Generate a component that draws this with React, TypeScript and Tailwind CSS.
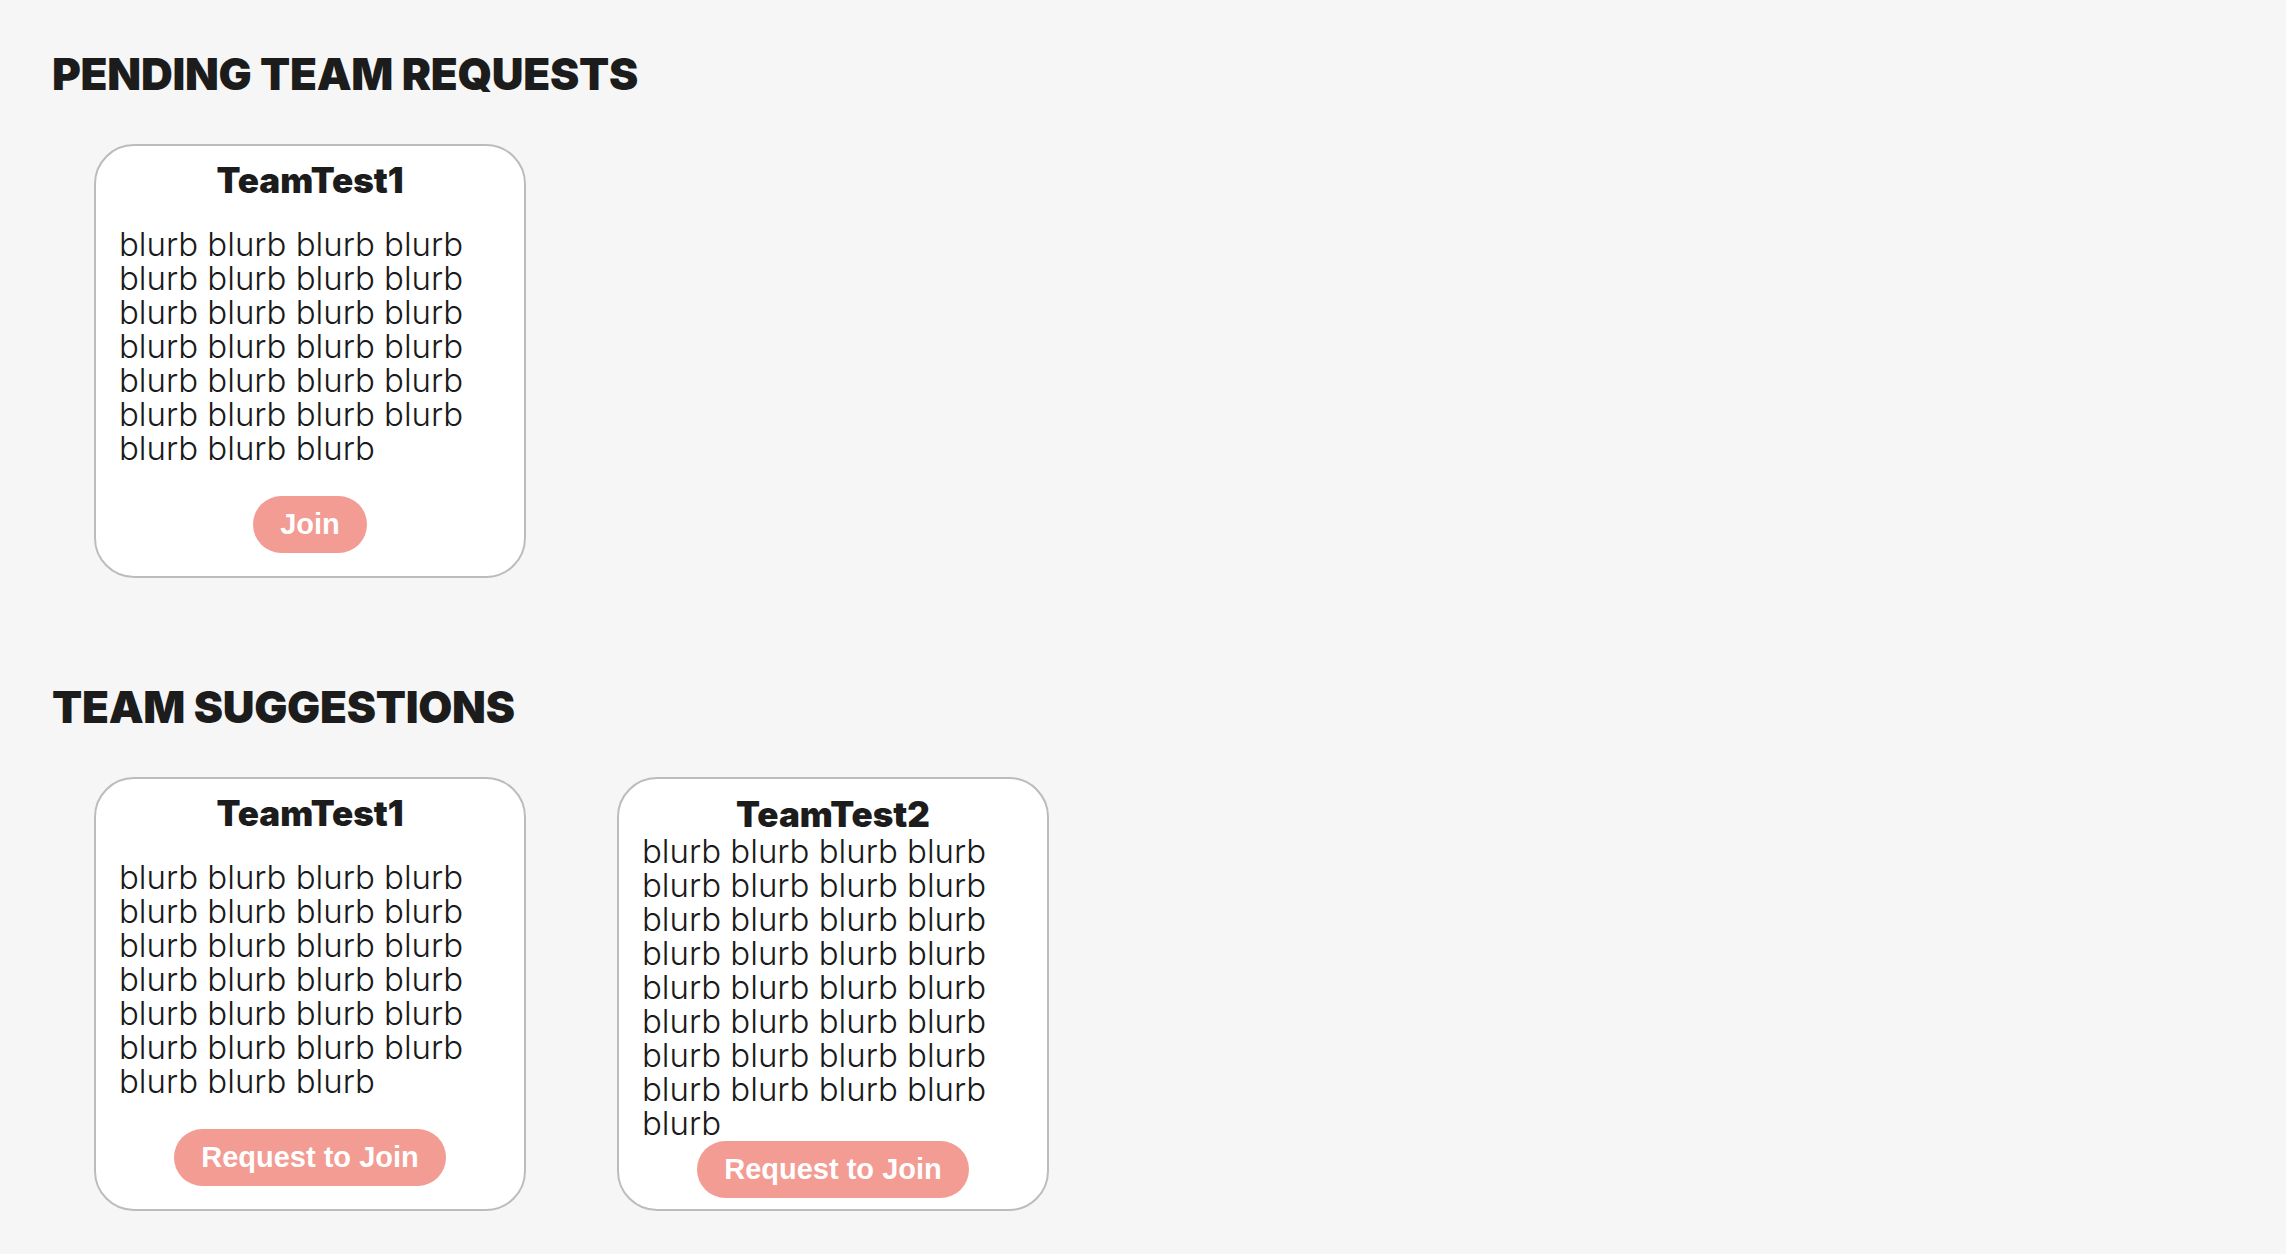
import React from 'react';

type Team = {
  name: string;
  blurbCount: number;
  action: string;
  tight?: boolean;
};

const pending: Team[] = [{ name: 'TeamTest1', blurbCount: 27, action: 'Join' }];

const suggestions: Team[] = [
  { name: 'TeamTest1', blurbCount: 27, action: 'Request to Join' },
  { name: 'TeamTest2', blurbCount: 33, action: 'Request to Join', tight: true },
];

function TeamCard({ team }: { team: Team }) {
  const blurb = Array.from({ length: team.blurbCount }, () => 'blurb').join(' ');

  return (
    <div className="w-[432px] h-[434px] shrink-0 rounded-[40px] border-2 border-[#bcbcbc] bg-white px-[23px] flex flex-col items-center overflow-hidden">
      <h3
        className={
          team.tight
            ? 'pt-[15px] text-[35px] leading-[40px] font-black text-[#1c1c1c] font-[Inter,sans-serif]'
            : 'pt-[14px] text-[35px] leading-[40px] font-black text-[#1c1c1c] font-[Inter,sans-serif]'
        }
      >
        {team.name}
      </h3>
      <p
        className={
          team.tight
            ? 'w-full text-[33px] leading-[34px] font-light text-[#1a1a1a] font-[Inter,sans-serif]'
            : 'mt-[27px] w-full text-[33px] leading-[34px] font-light text-[#1a1a1a] font-[Inter,sans-serif]'
        }
      >
        {blurb}
      </p>
      <button
        className={
          team.tight
            ? 'mt-[1px] rounded-full bg-[#f29c93] px-[27px] py-[11px] text-[29px] leading-[35px] font-bold text-white font-["Liberation_Sans",Arial,sans-serif]'
            : 'mt-[31px] rounded-full bg-[#f29c93] px-[27px] py-[11px] text-[29px] leading-[35px] font-bold text-white font-["Liberation_Sans",Arial,sans-serif]'
        }
      >
        {team.action}
      </button>
    </div>
  );
}

function Section({ title, teams }: { title: string; teams: Team[] }) {
  return (
    <section>
      <h2 className="text-[44px] leading-[44px] font-black text-[#1c1c1c] font-[Inter,sans-serif] tracking-[-0.006em]">
        {title}
      </h2>
      <div className="mt-[48px] ml-[42px] flex gap-[91px]">
        {teams.map((team) => (
          <TeamCard key={team.name} team={team} />
        ))}
      </div>
    </section>
  );
}

export default function App() {
  return (
    <div className="min-h-screen bg-[#f6f6f6] px-[52px] pt-[52px]">
      <Section title="PENDING TEAM REQUESTS" teams={pending} />
      <div className="mt-[107px]">
        <Section title="TEAM SUGGESTIONS" teams={suggestions} />
      </div>
    </div>
  );
}
